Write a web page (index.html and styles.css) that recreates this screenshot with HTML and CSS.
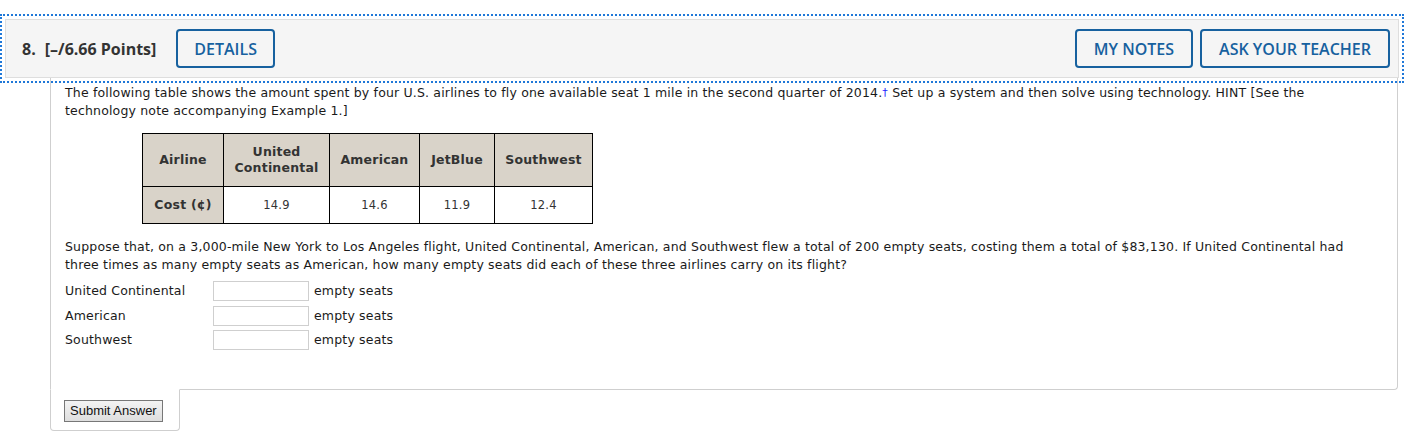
FILE: index.html
```html
<!DOCTYPE html>
<html>
<head>
<meta charset="utf-8">
<link rel="stylesheet" href="styles.css">
</head>
<body>
<div class="qhead">
  <div class="qtitle"><span class="qnum">8.</span><span class="qpts">[–/6.66 Points]</span></div>
  <button class="hbtn details">DETAILS</button>
  <div class="spacer"></div>
  <button class="hbtn">MY NOTES</button>
  <button class="hbtn">ASK YOUR TEACHER</button>
</div>
<div class="qbody">
  <p class="intro">The following table shows the amount spent by four U.S. airlines to fly one available seat 1 mile in the second quarter of 2014.<span class="dagger">†</span> Set up a system and then solve using technology. HINT [See the technology note accompanying Example 1.]</p>
  <table class="data">
    <tr class="hrow">
      <th class="c1">Airline</th>
      <th class="c2">United<br>Continental</th>
      <th class="c3">American</th>
      <th class="c4">JetBlue</th>
      <th class="c5">Southwest</th>
    </tr>
    <tr class="drow">
      <th>Cost (¢)</th>
      <td>14.9</td>
      <td>14.6</td>
      <td>11.9</td>
      <td>12.4</td>
    </tr>
  </table>
  <p class="problem">Suppose that, on a 3,000-mile New York to Los Angeles flight, United Continental, American, and Southwest flew a total of 200 empty seats, costing them a total of $83,130. If United Continental had three times as many empty seats as American, how many empty seats did each of these three airlines carry on its flight?</p>
  <div class="answers">
    <div class="arow"><span class="alabel">United Continental</span><input class="ainput" type="text"><span class="aunit">empty seats</span></div>
    <div class="arow"><span class="alabel">American</span><input class="ainput" type="text"><span class="aunit">empty seats</span></div>
    <div class="arow"><span class="alabel">Southwest</span><input class="ainput" type="text"><span class="aunit">empty seats</span></div>
  </div>
</div>
<div class="qfoot">
  <button class="submit">Submit Answer</button>
</div>
</body>
</html>
```
FILE: styles.css
```css
html, body {
  margin: 0;
  padding: 0;
  background: #fff;
}
body {
  font-family: "DejaVu Sans", Verdana, sans-serif;
  font-size: 12.5px;
  letter-spacing: 0.17px;
  color: #1a1a1a;
}
.qhead {
  display: flex;
  align-items: center;
  box-sizing: border-box;
  margin: 19px 6px 0 5px;
  height: 59px;
  padding: 0 8px 0 16px;
  background: #f5f5f5;
  border: 1px solid #dedede;
  outline: 2px dotted #1f78d8;
  outline-offset: 3px;
  font-family: "Open Sans", "Noto Sans", sans-serif;
  letter-spacing: 0;
}
.qtitle {
  font-weight: 700;
  font-size: 16px;
  color: #333;
  display: flex;
  gap: 9px;
  margin-right: 20px;
}
.spacer {
  flex: 1;
}
.hbtn {
  font-family: "Open Sans", "Noto Sans", sans-serif;
  font-weight: 600;
  font-size: 16px;
  color: #17619f;
  background: #f5f5f5;
  border: 2px solid #17619f;
  border-radius: 4px;
  height: 39px;
  padding: 0 17px;
  margin-left: 7px;
}
.hbtn.details {
  margin-left: 0;
  padding: 0 16px;
}
.qbody {
  margin: 0 7px 0 50px;
  border: 1px solid #cfcfcf;
  border-top: none;
  border-radius: 0 0 4px 0;
  padding: 6px 21px 36px 14px;
  line-height: 18px;
}
.intro, .problem {
  margin: 0;
}
.dagger {
  color: #2424ff;
  font-size: 11px;
  vertical-align: 1px;
}
.data {
  border-collapse: collapse;
  margin: 13px 0 14px 77px;
  letter-spacing: 0.2px;
}
.data th, .data td {
  border: 1px solid #000;
  text-align: center;
  padding: 0;
}
.data th {
  background: #d9d3c9;
  font-weight: 700;
  font-size: 12.5px;
  color: #333;
  line-height: 16px;
}
.hrow {
  height: 53px;
}
.drow {
  height: 37px;
}
.drow td {
  font-size: 11.5px;
  color: #333;
}
.c1 { width: 80px; }
.c2 { width: 105px; }
.c3 { width: 89px; }
.c4 { width: 74px; }
.c5 { width: 97px; }
.answers {
  margin-top: 5px;
}
.arow {
  display: flex;
  align-items: center;
  height: 24.5px;
}
.alabel {
  width: 148px;
}
.ainput {
  box-sizing: border-box;
  width: 96px;
  height: 20px;
  border: 1px solid #cfcfcf;
  margin: 0 5px 0 0;
  padding: 0;
}
.qfoot {
  box-sizing: border-box;
  width: 130px;
  margin: -1px 0 0 50px;
  border: 1px solid #cfcfcf;
  border-top: 1px solid #fff;
  border-radius: 0 0 4px 4px;
  padding: 10px 0 8px 13px;
  background: #fff;
}
.submit {
  font-family: "Liberation Sans", Arial, sans-serif;
  font-size: 13px;
  letter-spacing: 0;
  color: #111;
  height: 22px;
  padding: 0 5px;
  background: linear-gradient(#f3f3f3, #dedede);
  border: 1px solid #777;
  border-radius: 0;
}
```
